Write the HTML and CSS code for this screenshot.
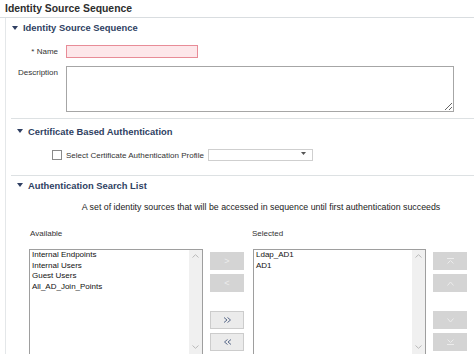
FILE: index.html
```html
<!DOCTYPE html>
<html>
<head>
<meta charset="utf-8">
<link rel="stylesheet" href="styles.css">
</head>
<body>
<div class="page-title">Identity Source Sequence</div>
<div class="panel">
  <div class="section s1">
    <div class="sec-head h1"><svg class="tri" width="6" height="4" viewBox="0 0 6 4"><path d="M0 0H6L3 4Z"/></svg>Identity Source Sequence</div>
    <div class="form-row name-row">
      <label class="lbl">* Name</label>
      <input class="name-input" type="text">
    </div>
    <div class="form-row desc-row">
      <label class="lbl">Description</label>
      <textarea class="desc-input"></textarea>
    </div>
  </div>
  <div class="section s2">
    <div class="sec-head h2"><svg class="tri" width="6" height="4" viewBox="0 0 6 4"><path d="M0 0H6L3 4Z"/></svg>Certificate Based Authentication</div>
    <div class="cert-row">
      <span class="cbox"></span>
      <span class="cert-label">Select Certificate Authentication Profile</span>
      <span class="select"><svg class="sel-arrow" width="5" height="3" viewBox="0 0 5 3"><path d="M0 0H5L2.5 3Z"/></svg></span>
    </div>
  </div>
  <div class="section s3">
    <div class="sec-head h3"><svg class="tri" width="6" height="4" viewBox="0 0 6 4"><path d="M0 0H6L3 4Z"/></svg>Authentication Search List</div>
    <div class="search-desc">A set of identity sources that will be accessed in sequence until first authentication succeeds</div>
    <div class="col-labels">
      <span class="lab-avail">Available</span>
      <span class="lab-sel">Selected</span>
    </div>
    <div class="lists">
      <div class="listbox avail">
        <div class="items">
          <div>Internal Endpoints</div>
          <div>Internal Users</div>
          <div>Guest Users</div>
          <div>All_AD_Join_Points</div>
        </div>
        <div class="vscroll">
          <svg width="7" height="4" viewBox="0 0 7 4"><path d="M0.5 3.5L3.5 0.7L6.5 3.5" /></svg>
          <svg width="7" height="4" viewBox="0 0 7 4"><path d="M0.5 0.5L3.5 3.3L6.5 0.5" /></svg>
        </div>
      </div>
      <div class="btn-col">
        <span class="btn off">&gt;</span>
        <span class="btn off">&lt;</span>
        <span class="btn on gap"><svg width="9" height="6" viewBox="0 0 9 6"><path d="M1 0.5L4 3L1 5.5M4.5 0.5L7.5 3L4.5 5.5"/></svg></span>
        <span class="btn on"><svg width="9" height="6" viewBox="0 0 9 6"><path d="M4.5 0.5L1.5 3L4.5 5.5M8 0.5L5 3L8 5.5"/></svg></span>
      </div>
      <div class="listbox sel">
        <div class="items">
          <div>Ldap_AD1</div>
          <div>AD1</div>
        </div>
        <div class="vscroll">
          <svg width="7" height="4" viewBox="0 0 7 4"><path d="M0.5 3.5L3.5 0.7L6.5 3.5" /></svg>
          <svg width="7" height="4" viewBox="0 0 7 4"><path d="M0.5 0.5L3.5 3.3L6.5 0.5" /></svg>
        </div>
      </div>
      <div class="btn-col right">
        <span class="btn off"><svg width="9" height="6" viewBox="0 0 9 6"><path d="M1 0.5H8M1.5 5.5L4.5 2.5L7.5 5.5"/></svg></span>
        <span class="btn off"><svg width="9" height="5" viewBox="0 0 9 5"><path d="M1.5 4.5L4.5 1L7.5 4.5"/></svg></span>
        <span class="btn off gap"><svg width="9" height="5" viewBox="0 0 9 5"><path d="M1.5 0.5L4.5 4L7.5 0.5"/></svg></span>
        <span class="btn off"><svg width="9" height="6" viewBox="0 0 9 6"><path d="M1.5 0.5L4.5 3.5L7.5 0.5M1 5.5H8"/></svg></span>
      </div>
    </div>
  </div>
</div>
</body>
</html>
```
FILE: styles.css
```css
html, body {
  margin: 0;
  padding: 0;
  background: #ffffff;
  overflow: hidden;
}
body {
  font-family: "Liberation Sans", Arial, sans-serif;
  font-size: 8px;
  color: #333333;
  width: 474px;
  height: 354px;
}
.page-title {
  box-sizing: border-box;
  height: 18px;
  line-height: 18px;
  padding-left: 5px;
  font-size: 10.4px;
  font-weight: bold;
  color: #2d2d2d;
  border-bottom: 1px solid #d9dde0;
}
.panel {
  margin-left: 5px;
  border-left: 1px solid #e4e7e9;
  height: 340px;
}
.section {
  margin-left: 5px;
}
.section.s1,
.section.s2 {
  border-bottom: 1px solid #dde1e3;
}
.sec-head {
  display: flex;
  align-items: center;
  font-size: 9.4px;
  font-weight: bold;
  color: #2f3f62;
}
.tri {
  fill: #2f3f62;
  margin-right: 5px;
}
.h1 {
  height: 19px;
  padding-left: 1px;
}
.h2 {
  height: 24px;
  padding-left: 6px;
}
.h3 {
  height: 18px;
  padding-left: 6px;
}
.form-row {
  display: flex;
  align-items: flex-start;
}
.lbl {
  width: 47px;
  text-align: right;
  margin-right: 8px;
  color: #333;
  line-height: 13px;
}
.name-row {
  margin-top: 8px;
}
.name-input {
  box-sizing: border-box;
  width: 132px;
  height: 13px;
  margin: 0;
  padding: 0;
  border: 1px solid #e88c97;
  background: #fde7ea;
  outline: none;
}
.desc-row {
  margin-top: 8px;
  padding-bottom: 6px;
}
.desc-row .lbl {
  line-height: 14px;
}
.desc-input {
  box-sizing: border-box;
  width: 388px;
  height: 46px;
  margin: 0;
  padding: 0;
  border: 1px solid #a6a6a6;
  background: #fff;
  font-size: 8px;
  outline: none;
  resize: both;
}
.cert-row {
  display: flex;
  align-items: center;
  height: 12px;
  margin-top: 6px;
  margin-bottom: 14px;
  padding-left: 41px;
}
.cbox {
  box-sizing: border-box;
  width: 10px;
  height: 10px;
  border: 1px solid #8a8a8a;
  background: #fff;
  margin-right: 4px;
}
.cert-label {
  width: 142px;
  color: #333;
}
.select {
  box-sizing: border-box;
  width: 105px;
  height: 12px;
  border: 1px solid #cfcfcf;
  background: #fff;
  display: flex;
  justify-content: flex-end;
  align-items: flex-start;
  padding: 2px 6px 0 0;
}
.sel-arrow {
  fill: #555;
}
.search-desc {
  margin-top: 8px;
  line-height: 10px;
  font-size: 8.8px;
  padding-left: 37px;
  text-align: center;
  color: #222;
}
.col-labels {
  display: flex;
  margin-top: 17px;
  line-height: 10px;
  color: #333;
}
.lab-avail {
  margin-left: 19px;
  width: 222px;
}
.lists {
  display: flex;
  align-items: flex-start;
  margin-top: 10px;
  margin-left: 18px;
}
.listbox {
  box-sizing: border-box;
  height: 106px;
  border: 1px solid #9e9e9e;
  display: flex;
  background: #fff;
}
.listbox.avail {
  width: 174px;
}
.listbox.sel {
  width: 173px;
}
.items {
  flex: 1;
  padding-left: 2px;
  line-height: 10.6px;
  color: #111;
}
.vscroll {
  width: 13px;
  background: #f0f0f0;
  display: flex;
  flex-direction: column;
  justify-content: space-between;
  align-items: center;
  padding: 4px 0 5px;
  box-sizing: border-box;
}
.vscroll svg {
  fill: none;
  stroke: #b9b9b9;
  stroke-width: 1;
}
.btn-col {
  display: flex;
  flex-direction: column;
  width: 34px;
  margin-left: 7px;
  margin-right: 9px;
  padding-top: 3px;
}
.btn-col.right {
  margin-left: 7px;
  margin-right: 0;
}
.btn {
  box-sizing: border-box;
  height: 18px;
  margin-bottom: 4px;
  display: flex;
  align-items: center;
  justify-content: center;
  font-size: 9px;
}
.btn.gap {
  margin-top: 15px;
}
.btn.off {
  background: #d4d4d4;
  color: #ececec;
}
.btn.on {
  background: #ebebeb;
  border: 1px solid #cccccc;
}
.btn svg {
  fill: none;
  stroke: #ececec;
  stroke-width: 1;
}
.btn.on svg {
  stroke: #5a6a8a;
}
```
